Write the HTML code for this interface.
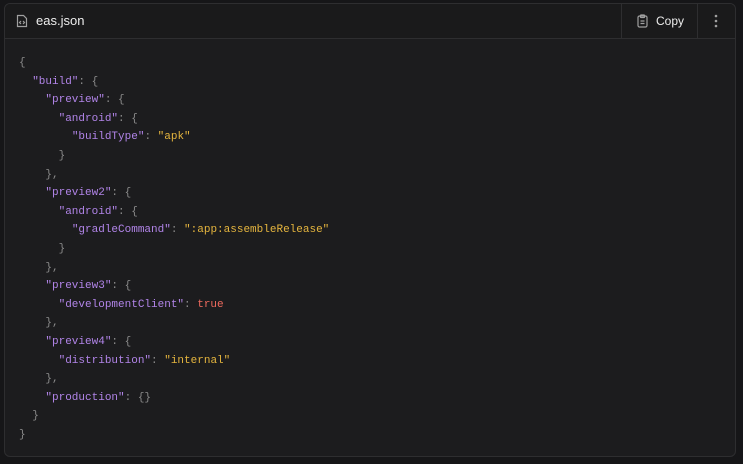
<!DOCTYPE html>
<html><head><style>
html,body{margin:0;padding:0;background:#161618;width:743px;height:464px;overflow:hidden}
.card{position:absolute;left:4px;top:3px;width:730px;height:452px;border:1px solid #2e2e30;border-radius:6px;background:#1c1c1e;overflow:hidden}
.hdr{height:34px;border-bottom:1px solid #2e2e30;background:#1a1a1b;position:relative}
.title{position:absolute;left:31px;top:9px;font:13px "Liberation Sans",sans-serif;color:#ededed}
.copy{position:absolute;left:616px;top:0;width:75px;height:34px;border-left:1px solid #2e2e30;border-right:1px solid #2e2e30}
.copy span{position:absolute;left:34px;top:10px;font:12px "Liberation Sans",sans-serif;color:#ededed}
pre{margin:0;position:absolute;left:14px;top:50px;font:11px/18.6px "Liberation Mono",monospace;color:#8b8b8b}
.k{color:#b184e8}.s{color:#e5b53e}.t{color:#ef6a5e}
</style></head><body>
<div class="card">
<div class="hdr">
<svg style="position:absolute;left:11px;top:10px" width="12" height="14" viewBox="0 0 12 14" fill="none" stroke="#a0a0a0" stroke-width="1.2"><path d="M1.5 1.5h6l3 3v8h-9z"/><path d="M5 7l-1.5 1.5L5 10M7 7l1.5 1.5L7 10"/></svg>
<div class="title">eas.json</div>
<div class="copy">
<svg style="position:absolute;left:15px;top:10px" width="11" height="14" viewBox="0 0 11 14" fill="none" stroke="#a0a0a0" stroke-width="1.2"><rect x="1" y="2" width="9" height="11" rx="1.5"/><rect x="3.5" y="1" width="4" height="2.5" rx=".5"/><path d="M3.5 7h4M3.5 9.5h4"/></svg>
<span>Copy</span></div>
<svg style="position:absolute;left:709px;top:10px" width="4" height="14"><circle cx="2" cy="2" r="1.3" fill="#a0a0a0"/><circle cx="2" cy="7" r="1.3" fill="#a0a0a0"/><circle cx="2" cy="12" r="1.3" fill="#a0a0a0"/></svg>
</div>
<pre>{
  <span class="k">"build"</span>: {
    <span class="k">"preview"</span>: {
      <span class="k">"android"</span>: {
        <span class="k">"buildType"</span>: <span class="s">"apk"</span>
      }
    },
    <span class="k">"preview2"</span>: {
      <span class="k">"android"</span>: {
        <span class="k">"gradleCommand"</span>: <span class="s">":app:assembleRelease"</span>
      }
    },
    <span class="k">"preview3"</span>: {
      <span class="k">"developmentClient"</span>: <span class="t">true</span>
    },
    <span class="k">"preview4"</span>: {
      <span class="k">"distribution"</span>: <span class="s">"internal"</span>
    },
    <span class="k">"production"</span>: {}
  }
}</pre>
</div>
</body></html>
